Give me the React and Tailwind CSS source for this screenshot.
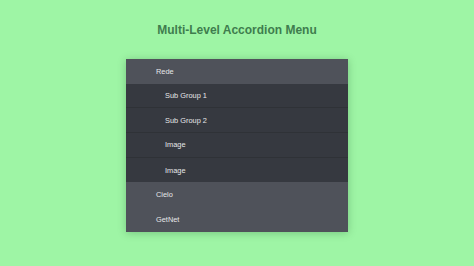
const groups = [
  { label: 'Rede', open: true, items: ['Sub Group 1', 'Sub Group 2', 'Image', 'Image'] },
  { label: 'Cielo', open: false, items: [] },
  { label: 'GetNet', open: false, items: [] },
];

export default function App() {
  return (
    <div className="h-[266px] bg-[#9ef5a5] flex flex-col items-center font-['Liberation_Sans',Arial,sans-serif]">
      <h1 className="mt-[23px] text-[12px] leading-[14px] font-bold text-[#3f7d4e]">
        Multi-Level Accordion Menu
      </h1>

      <nav className="mt-[22px] w-[222px] bg-[#4f525a] shadow-[0_1px_8px_rgba(0,60,20,0.25)]">
        {groups.map((g) => (
          <div key={g.label}>
            <div className="h-[24.7px] flex items-center pl-[30px] text-[7.4px] text-[#e6e7e9]">
              {g.label}
            </div>
            {g.open && (
              <ul className="bg-[#363940]">
                {g.items.map((item, i) => (
                  <li
                    key={i}
                    className="h-[24.7px] flex items-center pl-[39px] text-[7.4px] text-[#e6e7e9] border-b border-[#2f3237] last:border-b-0"
                  >
                    {item}
                  </li>
                ))}
              </ul>
            )}
          </div>
        ))}
      </nav>
    </div>
  );
}
